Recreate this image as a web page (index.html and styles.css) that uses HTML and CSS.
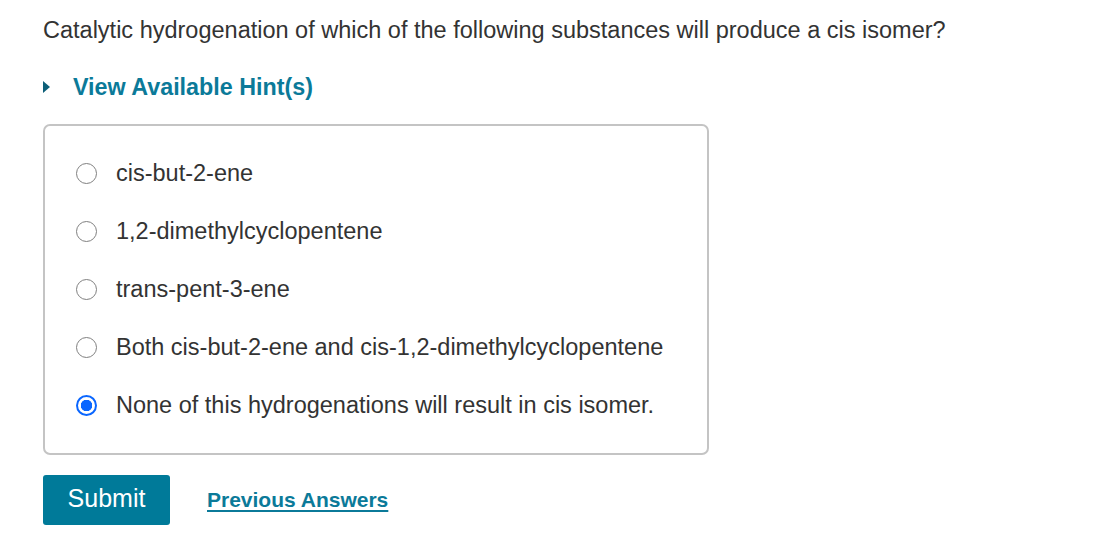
FILE: index.html
```html
<!DOCTYPE html>
<html>
<head>
<meta charset="utf-8">
<link rel="stylesheet" href="styles.css">
</head>
<body>
<div class="page">
  <p class="question">Catalytic hydrogenation of which of the following substances will produce a cis isomer?</p>
  <div class="hint">
    <span class="caret"></span>
    <a class="hint-link">View Available Hint(s)</a>
  </div>
  <div class="choices">
    <label class="choice"><span class="radio"></span><span class="label">cis-but-2-ene</span></label>
    <label class="choice"><span class="radio"></span><span class="label">1,2-dimethylcyclopentene</span></label>
    <label class="choice"><span class="radio"></span><span class="label">trans-pent-3-ene</span></label>
    <label class="choice"><span class="radio"></span><span class="label">Both cis-but-2-ene and cis-1,2-dimethylcyclopentene</span></label>
    <label class="choice"><span class="radio checked"></span><span class="label">None of this hydrogenations will result in cis isomer.</span></label>
  </div>
  <div class="actions">
    <button class="submit">Submit</button>
    <a class="prev">Previous Answers</a>
  </div>
</div>
</body>
</html>
```
FILE: styles.css
```css
html, body {
  margin: 0;
  padding: 0;
  background: #fff;
}
.page {
  padding: 14px 0 0 43px;
  font-family: "Liberation Sans", Arial, sans-serif;
  color: #333;
}
.question {
  margin: 0;
  font-size: 23.5px;
  line-height: 32px;
}
.hint {
  display: flex;
  align-items: center;
  margin-top: 25px;
  height: 32px;
}
.caret {
  width: 0;
  height: 0;
  border-top: 6px solid transparent;
  border-bottom: 6px solid transparent;
  border-left: 7px solid #0d5f78;
  margin-right: 23px;
}
.hint-link {
  color: #0b7a99;
  font-weight: bold;
  font-size: 23.3px;
}
.choices {
  margin-top: 21px;
  width: 662px;
  border: 2px solid #c4c4c4;
  border-radius: 7px;
  padding: 18px 0 19px 0;
  display: flex;
  flex-direction: column;
}
.choice {
  display: flex;
  align-items: center;
  height: 58px;
  padding-left: 31px;
  font-size: 23.5px;
}
.radio {
  box-sizing: border-box;
  width: 21px;
  height: 21px;
  border: 1.5px solid #808080;
  border-radius: 50%;
  margin-right: 19px;
  flex: none;
}
.radio.checked {
  border: 2px solid #0a66ff;
  background: radial-gradient(circle, #0a66ff 0 5.5px, #fff 6px);
}
.actions {
  display: flex;
  align-items: center;
  margin-top: 20px;
}
.submit {
  width: 127px;
  height: 50px;
  background: #007a99;
  color: #fff;
  border: none;
  border-radius: 3px;
  font-family: inherit;
  font-size: 25px;
  padding: 0 0 4px 0;
  margin-right: 37px;
}
.prev {
  color: #0b7a99;
  font-weight: bold;
  font-size: 21px;
  text-decoration: underline;
  text-underline-offset: 3px;
  text-decoration-thickness: 2px;
}
```
